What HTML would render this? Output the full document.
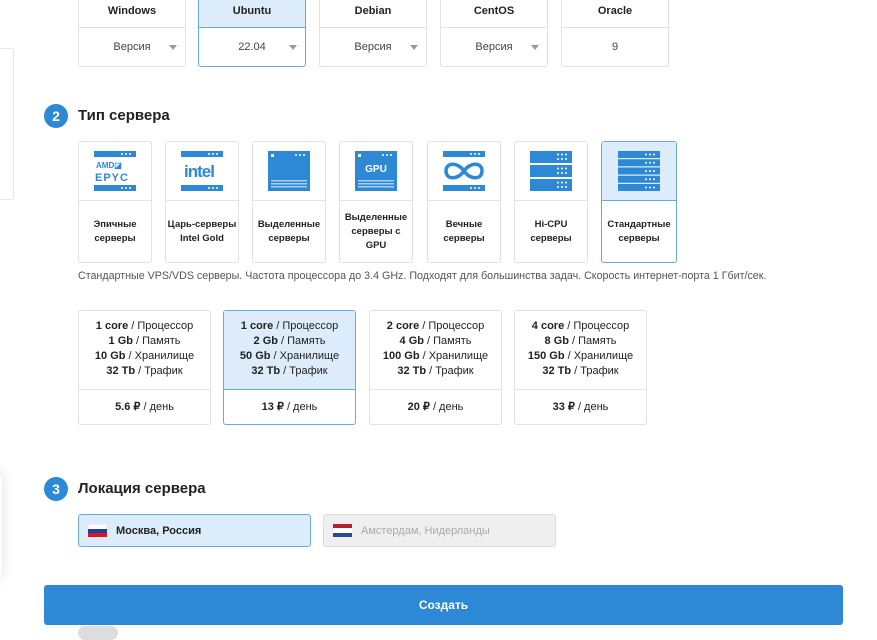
<!DOCTYPE html>
<html><head><meta charset="utf-8"><style>
*{box-sizing:border-box;margin:0;padding:0}
body{width:877px;height:630px;overflow:hidden;background:#fff;font-family:"Liberation Sans",Arial,sans-serif;color:#222;position:relative}
.a{position:absolute}
.card{position:absolute;border:1px solid #e2e2e2;border-radius:3px;background:#fff}
.sel{border-color:#6aa8e0;}
.os .h{height:33px;border-bottom:1px solid #e2e2e2;text-align:center;font-weight:bold;font-size:11px;line-height:20px;padding-top:6px}
.os .v{text-align:center;font-size:11px;color:#444;line-height:38px;position:relative}
.os .v i{position:absolute;right:8px;top:17px;border:4px solid transparent;border-top:5px solid #999;border-bottom:0}
.circ{position:absolute;width:24px;height:24px;border-radius:50%;background:#2d88d6;color:#fff;font-weight:bold;font-size:14px;text-align:center;line-height:24px}
.tt{position:absolute;font-size:15px;color:#222;font-weight:bold}
.st .ic{height:59px;border-bottom:1px solid #e2e2e2;position:relative}
.st .ic svg{position:absolute;left:50%;top:9px;margin-left:-21px}
.st .t{height:61px;display:flex;align-items:center;justify-content:center;text-align:center;font-size:9.5px;font-weight:bold;line-height:14px;white-space:nowrap}
.pl .s{height:78px;text-align:center;font-size:11px;line-height:15px;padding-top:8px}
.pl .p{border-top:1px solid #e2e2e2;text-align:center;font-size:11px;line-height:35px}
.loc{position:absolute;height:33px;border-radius:3px;font-size:11px;display:flex;align-items:center;padding-left:9px}
.flag{width:19px;height:13px;margin-right:9px;display:flex;flex-direction:column}
.flag b{flex:1}
</style></head><body>
<div class="a" style="left:-10px;top:48px;width:24px;height:152px;border:1px solid #e6e6e6;border-radius:3px"></div>
<div class="a" style="left:-20px;top:470px;width:22px;height:110px;box-shadow:0 0 14px rgba(0,0,0,.12);border-radius:10px"></div>

<div class="card os" style="left:78px;top:-6px;width:108px;height:73px"><div class="h">Windows</div><div class="v">Версия<i></i></div></div>
<div class="card os sel" style="left:198px;top:-6px;width:108px;height:73px"><div class="h" style="background:#dcecfb;border-bottom-color:#6aa8e0">Ubuntu</div><div class="v">22.04<i></i></div></div>
<div class="card os" style="left:319px;top:-6px;width:108px;height:73px"><div class="h">Debian</div><div class="v">Версия<i></i></div></div>
<div class="card os" style="left:440px;top:-6px;width:108px;height:73px"><div class="h">CentOS</div><div class="v">Версия<i></i></div></div>
<div class="card os" style="left:561px;top:-6px;width:108px;height:73px"><div class="h">Oracle</div><div class="v">9</div></div>

<div class="circ" style="left:44px;top:104px">2</div>
<div class="tt" style="left:78px;top:107px">Тип сервера</div>

<div class="card st" style="left:78px;top:141px;width:74px;height:122px"><div class="ic"><svg width="42" height="40"><rect x="0" y="0" width="42" height="6" fill="#2d88d6"/><rect x="0" y="34" width="42" height="6" fill="#2d88d6"/><g fill="#fff"><circle cx="28" cy="3" r="1"/><circle cx="32" cy="3" r="1"/><circle cx="36" cy="3" r="1"/><circle cx="28" cy="37" r="1"/><circle cx="32" cy="37" r="1"/><circle cx="36" cy="37" r="1"/></g><text x="2" y="17" font-size="8" font-weight="bold" fill="#2d88d6" font-family="Liberation Sans">AMD◪</text><text x="1" y="30" font-size="11" font-weight="bold" fill="#2d88d6" font-family="Liberation Sans" letter-spacing="1">EPYC</text></svg></div><div class="t">Эпичные<br>серверы</div></div>
<div class="card st" style="left:165px;top:141px;width:74px;height:122px"><div class="ic"><svg width="42" height="40"><rect x="0" y="0" width="42" height="6" fill="#2d88d6"/><rect x="0" y="34" width="42" height="6" fill="#2d88d6"/><g fill="#fff"><circle cx="28" cy="3" r="1"/><circle cx="32" cy="3" r="1"/><circle cx="36" cy="3" r="1"/><circle cx="28" cy="37" r="1"/><circle cx="32" cy="37" r="1"/><circle cx="36" cy="37" r="1"/></g><text x="3" y="26" font-size="17" font-weight="bold" fill="#2d88d6" font-family="Liberation Sans" letter-spacing="-1">intel</text></svg></div><div class="t">Царь-серверы<br>Intel Gold</div></div>
<div class="card st" style="left:252px;top:141px;width:74px;height:122px"><div class="ic"><svg width="42" height="40"><rect width="42" height="40" fill="#2d88d6"/><g fill="#fff"><rect x="3" y="3" width="3" height="3"/><circle cx="28" cy="4" r="1"/><circle cx="32" cy="4" r="1"/><circle cx="36" cy="4" r="1"/></g><g fill="#a9cdf0"><rect x="3" y="29" width="36" height="1.5"/><rect x="3" y="32" width="36" height="1.5"/><rect x="3" y="35" width="36" height="1.5"/></g></svg></div><div class="t">Выделенные<br>серверы</div></div>
<div class="card st" style="left:339px;top:141px;width:74px;height:122px"><div class="ic"><svg width="42" height="40"><rect width="42" height="40" fill="#2d88d6"/><g fill="#fff"><rect x="3" y="3" width="3" height="3"/><circle cx="28" cy="4" r="1"/><circle cx="32" cy="4" r="1"/><circle cx="36" cy="4" r="1"/></g><text x="21" y="21" text-anchor="middle" font-size="10" font-weight="bold" fill="#fff" font-family="Liberation Sans">GPU</text><g fill="#a9cdf0"><rect x="3" y="29" width="36" height="1.5"/><rect x="3" y="32" width="36" height="1.5"/><rect x="3" y="35" width="36" height="1.5"/></g></svg></div><div class="t">Выделенные<br>серверы с<br>GPU</div></div>
<div class="card st" style="left:427px;top:141px;width:74px;height:122px"><div class="ic"><svg width="42" height="40"><rect x="0" y="0" width="42" height="6" fill="#2d88d6"/><rect x="0" y="34" width="42" height="6" fill="#2d88d6"/><g fill="#fff"><circle cx="28" cy="3" r="1"/><circle cx="32" cy="3" r="1"/><circle cx="36" cy="3" r="1"/><circle cx="28" cy="37" r="1"/><circle cx="32" cy="37" r="1"/><circle cx="36" cy="37" r="1"/></g><path d="M21 20 C15 11 3 11 3 20 C3 29 15 29 21 20 C27 11 39 11 39 20 C39 29 27 29 21 20Z" fill="none" stroke="#2d88d6" stroke-width="3.5"/></svg></div><div class="t">Вечные<br>серверы</div></div>
<div class="card st" style="left:514px;top:141px;width:74px;height:122px"><div class="ic"><svg width="42" height="40"><g fill="#2d88d6"><rect y="0" width="42" height="12"/><rect y="14" width="42" height="12"/><rect y="28" width="42" height="12"/></g><g fill="#fff"><circle cx="28" cy="3.5" r="1"/><circle cx="32" cy="3.5" r="1"/><circle cx="36" cy="3.5" r="1"/><circle cx="28" cy="8" r="1"/><circle cx="32" cy="8" r="1"/><circle cx="36" cy="8" r="1"/><circle cx="28" cy="17.5" r="1"/><circle cx="32" cy="17.5" r="1"/><circle cx="36" cy="17.5" r="1"/><circle cx="28" cy="22" r="1"/><circle cx="32" cy="22" r="1"/><circle cx="36" cy="22" r="1"/><circle cx="28" cy="31.5" r="1"/><circle cx="32" cy="31.5" r="1"/><circle cx="36" cy="31.5" r="1"/><circle cx="28" cy="36" r="1"/><circle cx="32" cy="36" r="1"/><circle cx="36" cy="36" r="1"/></g></svg></div><div class="t">Hi-CPU<br>серверы</div></div>
<div class="card st sel" style="left:601px;top:141px;width:76px;height:122px"><div class="ic" style="background:#dcecfb;border-bottom-color:#6aa8e0"><svg width="42" height="40"><g fill="#2d88d6"><rect y="0" width="42" height="7"/><rect y="8.25" width="42" height="7"/><rect y="16.5" width="42" height="7"/><rect y="24.75" width="42" height="7"/><rect y="33" width="42" height="7"/></g><g fill="#fff"><circle cx="28" cy="3.5" r="1"/><circle cx="32" cy="3.5" r="1"/><circle cx="36" cy="3.5" r="1"/><circle cx="28" cy="11.75" r="1"/><circle cx="32" cy="11.75" r="1"/><circle cx="36" cy="11.75" r="1"/><circle cx="28" cy="20" r="1"/><circle cx="32" cy="20" r="1"/><circle cx="36" cy="20" r="1"/><circle cx="28" cy="28.25" r="1"/><circle cx="32" cy="28.25" r="1"/><circle cx="36" cy="28.25" r="1"/><circle cx="28" cy="36.5" r="1"/><circle cx="32" cy="36.5" r="1"/><circle cx="36" cy="36.5" r="1"/></g></svg></div><div class="t">Стандартные<br>серверы</div></div>

<div class="a" style="left:78px;top:270px;font-size:10.7px;color:#555;white-space:nowrap">Стандартные VPS/VDS серверы. Частота процессора до 3.4 GHz. Подходят для большинства задач. Скорость интернет-порта 1 Гбит/сек.</div>

<div class="card pl" style="left:78px;top:310px;width:133px;height:115px"><div class="s"><b>1 core</b> / Процессор<br><b>1 Gb</b> / Память<br><b>10 Gb</b> / Хранилище<br><b>32 Tb</b> / Трафик</div><div class="p"><b>5.6 ₽</b> / день</div></div>
<div class="card pl sel" style="left:223px;top:310px;width:133px;height:115px"><div class="s" style="background:#dcecfb"><b>1 core</b> / Процессор<br><b>2 Gb</b> / Память<br><b>50 Gb</b> / Хранилище<br><b>32 Tb</b> / Трафик</div><div class="p" style="border-top-color:#6aa8e0"><b>13 ₽</b> / день</div></div>
<div class="card pl" style="left:369px;top:310px;width:133px;height:115px"><div class="s"><b>2 core</b> / Процессор<br><b>4 Gb</b> / Память<br><b>100 Gb</b> / Хранилище<br><b>32 Tb</b> / Трафик</div><div class="p"><b>20 ₽</b> / день</div></div>
<div class="card pl" style="left:514px;top:310px;width:133px;height:115px"><div class="s"><b>4 core</b> / Процессор<br><b>8 Gb</b> / Память<br><b>150 Gb</b> / Хранилище<br><b>32 Tb</b> / Трафик</div><div class="p"><b>33 ₽</b> / день</div></div>

<div class="circ" style="left:44px;top:477px">3</div>
<div class="tt" style="left:78px;top:480px">Локация сервера</div>

<div class="loc" style="left:78px;top:514px;width:233px;background:#dcecfb;border:1px solid #6aa8e0;font-weight:bold"><div class="flag"><b style="background:#fff;border:1px solid #eee;border-bottom:0"></b><b style="background:#1c3fa0"></b><b style="background:#e0141c"></b></div>Москва, Россия</div>
<div class="loc" style="left:323px;top:514px;width:233px;background:#efefef;border:1px solid #ddd;color:#aaa"><div class="flag"><b style="background:#b4232c"></b><b style="background:#fff"></b><b style="background:#284b96"></b></div>Амстердам, Нидерланды</div>

<div class="a" style="left:44px;top:585px;width:799px;height:40px;background:#2d88d6;border-radius:3px;color:#fff;font-weight:bold;font-size:12px;text-align:center;line-height:40px">Создать</div>
<div class="a" style="left:78px;top:626px;width:40px;height:14px;border-radius:7px;background:#ddd"></div>
</body></html>
